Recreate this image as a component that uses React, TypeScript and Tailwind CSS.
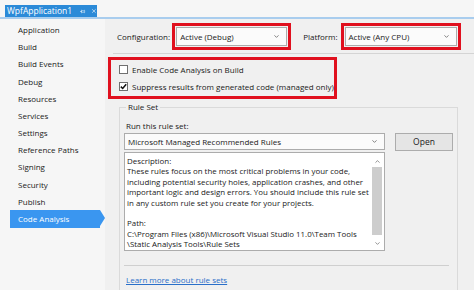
import { ChevronDown, ChevronUp, Pin, X } from 'lucide-react'

// ── Data ─────────────────────────────────────────────────────────────────────

const NAV_ITEMS = [
  'Application',
  'Build',
  'Build Events',
  'Debug',
  'Resources',
  'Services',
  'Settings',
  'Reference Paths',
  'Signing',
  'Security',
  'Publish',
  'Code Analysis',
]

const ACTIVE = 'Code Analysis'

const DESCRIPTION = [
  'Description:',
  'These rules focus on the most critical problems in your code,',
  'including potential security holes, application crashes, and other',
  'important logic and design errors. You should include this rule set',
  'in any custom rule set you create for your projects.',
  '',
  'Path:',
  'C:\\Program Files (x86)\\Microsoft Visual Studio 11.0\\Team Tools',
  '\\Static Analysis Tools\\Rule Sets',
]

// ── Main Component ───────────────────────────────────────────────────────────

export default function App() {
  return (
    <div className="w-[474px] h-[290px] overflow-hidden flex flex-col bg-[#f6f6f6] text-[#1a1a1a] font-['Open_Sans','Noto_Sans',sans-serif] text-[8px] leading-none">
      {/* Document tab */}
      <div className="pt-[5px] pl-[5px] flex flex-col">
        <div className="h-[12px] w-[92px] bg-[#2b8ad8] text-white flex items-center pl-[2px]">
          <span className="text-[8.5px]">WpfApplication1</span>
          <Pin size={7} strokeWidth={2.5} className="ml-[8px] rotate-90" />
          <X size={8} strokeWidth={2.5} className="ml-[6px]" />
        </div>
      </div>
      <div className="h-[2px] bg-[#a9cdee]" />

      <div className="flex flex-1 min-h-0">
        {/* Sidebar */}
        <div className="w-[105px] pt-[2.4px] flex flex-col">
          {NAV_ITEMS.map(item =>
            item === ACTIVE ? (
              <div key={item} className="h-[17.2px] flex items-stretch pl-[10px]">
                <div className="w-[90px] bg-[#3a96f0] text-white flex items-center pl-[8px]">{item}</div>
                <div className="w-0 h-0 border-y-[8.6px] border-y-transparent border-l-[5px] border-l-[#3a96f0]" />
              </div>
            ) : (
              <div key={item} className="h-[17.2px] flex items-center pl-[18px]">{item}</div>
            )
          )}
        </div>

        {/* Main panel */}
        <div className="flex-1 bg-[#f0f0f0] flex flex-col">
          {/* Configuration row */}
          <div className="mt-[4px] h-[27px] flex items-center pl-[12px]">
            <span>Configuration:</span>
            <div className="ml-[2px] w-[119px] h-[27px] border-[3px] border-[#e0101e] p-[1px] flex items-center">
              <Dropdown label="Active (Debug)" />
            </div>
            <span className="ml-[12px]">Platform:</span>
            <div className="ml-[3px] w-[120px] h-[27px] border-[3px] border-[#e0101e] p-[1px] flex items-center">
              <Dropdown label="Active (Any CPU)" />
            </div>
          </div>

          <div className="mt-[3px] ml-[8px] h-px bg-[#d4d4d4]" />

          {/* Checkboxes */}
          <div className="mt-[3px] ml-[3px] w-[229px] h-[42px] border-[3px] border-[#e0101e] pt-[1px] pl-[8px] flex flex-col">
            <Check label="Enable Code Analysis on Build" />
            <Check label="Suppress results from generated code (managed only)" checked />
          </div>

          {/* Rule set group */}
          <fieldset className="mt-[3px] ml-[14px] mr-[16px] flex-1 border border-[#dadada] border-b-0 px-[4px] pb-0 min-w-0">
            <legend className="ml-[2px] px-[2px] leading-[10px]">Rule Set</legend>
            <div className="mt-[10px] pl-[2px]">Run this rule set:</div>
            <div className="mt-[3px] flex items-start">
              <div className="w-[261px] flex flex-col">
                <div className="h-[17px]">
                  <Dropdown label="Microsoft Managed Recommended Rules" />
                </div>
                {/* Description box */}
                <div className="mt-[2px] h-[99px] bg-white border border-[#acacac] flex">
                  <div className="flex-1 pl-[2px] pt-[3px] text-[7.9px] leading-[10.4px]">
                    {DESCRIPTION.map((line, idx) => (
                      <div key={idx} className="h-[10.4px] whitespace-nowrap">{line}</div>
                    ))}
                  </div>
                  <div className="w-[10px] mr-[2px] flex flex-col items-center text-[#6d6d6d]">
                    <ChevronUp size={7} strokeWidth={2.5} className="mt-[5px]" />
                    <div className="mt-[2px] w-full h-[68px] bg-[#cdcdcd]" />
                    <div className="flex-1" />
                    <ChevronDown size={7} strokeWidth={2.5} className="mb-[3px]" />
                  </div>
                </div>
              </div>
              <div className="ml-[10px] w-[58px] h-[18px] bg-[#e5e5e5] border border-[#acacac] flex items-center justify-center text-[8.5px]">
                Open
              </div>
            </div>

            <div className="mt-[14px] mr-[4px] h-px bg-[#cfcfcf]" />
            <div className="mt-[10px] pl-[2px] text-[#2a6fc9] underline">Learn more about rule sets</div>
          </fieldset>
        </div>
      </div>
    </div>
  )
}

// ── Dropdown ─────────────────────────────────────────────────────────────────

function Dropdown({ label }: { label: string }) {
  return (
    <div className="w-full h-full bg-[#fbfbfb] border border-[#acacac] flex items-center pl-[3px] pr-[6px]">
      <span className="flex-1 whitespace-nowrap">{label}</span>
      <ChevronDown size={7} strokeWidth={2.5} className="text-[#555]" />
    </div>
  )
}

// ── Checkbox ─────────────────────────────────────────────────────────────────

function Check({ label, checked }: { label: string; checked?: boolean }) {
  return (
    <div className="h-[17px] flex items-center">
      <div className="w-[9px] h-[9px] bg-white border border-[#6f6f6f] flex items-center justify-center">
        {checked && (
          <svg width="7" height="7" viewBox="0 0 7 7">
            <path d="M0.8 3.6 L2.7 5.5 L6.2 1.2" fill="none" stroke="#111" strokeWidth="1.5" />
          </svg>
        )}
      </div>
      <span className="ml-[4px] whitespace-nowrap">{label}</span>
    </div>
  )
}
